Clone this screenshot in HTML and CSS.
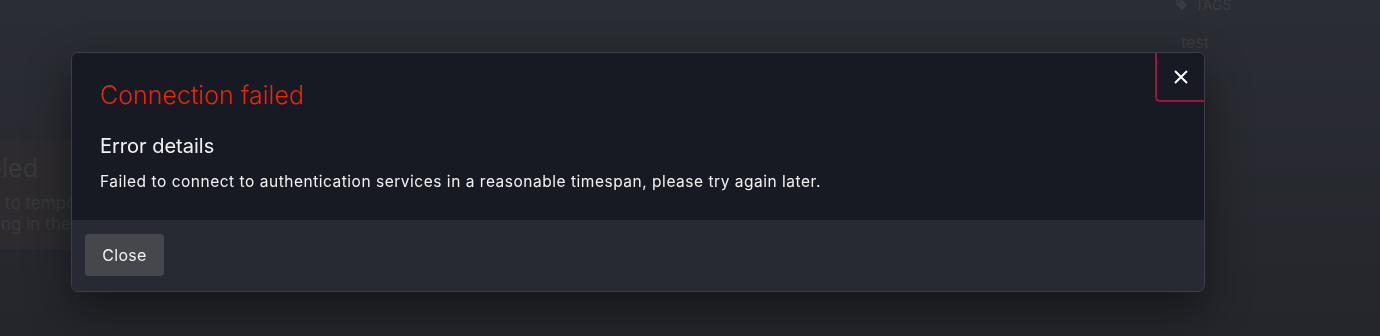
FILE: index.html
```html
<!DOCTYPE html>
<html lang="en">
<head>
  <meta charset="UTF-8">
  <title>Connection failed</title>
  <link rel="stylesheet" href="styles.css">
</head>
<body>

<div class="page">
  <div class="main">
    <div class="notice">
      <h3 class="line"><span class="cut cut-title">Account disabled</span></h3>
      <p class="line"><span class="cut cut-one">Your account has been set&nbsp;</span>to temporarily suspended</p>
      <p class="line"><span class="cut cut-two">while somethi</span>ng in the system is checked</p>
    </div>
  </div>
  <aside class="sidebar">
    <div class="side-title">
      <svg class="tag-icon" viewBox="0 0 16 16" width="13" height="13">
        <path d="M1 1h6.5l7.5 7.5-6.5 6.5L1 7.5z" fill="currentColor"/>
        <circle cx="4.5" cy="4.5" r="1.3" fill="#2a2c34"/>
      </svg>
      TAGS
    </div>
    <div class="side-item">test</div>
  </aside>
</div>

<div class="backdrop">
  <div class="modal">
    <button class="modal-x" aria-label="Close">
      <svg viewBox="0 0 14 14" width="14" height="14">
        <path d="M1 1L13 13M13 1L1 13" stroke="#fff" stroke-width="2" fill="none"/>
      </svg>
    </button>
    <div class="modal-body">
      <h2 class="modal-title">Connection failed</h2>
      <h4>Error details</h4>
      <p>Failed to connect to authentication services in a reasonable timespan, please try again later.</p>
    </div>
    <div class="modal-footer">
      <button class="btn">Close</button>
    </div>
  </div>
</div>

</body>
</html>
```

FILE: styles.css
```css
* {
  margin: 0;
  padding: 0;
  box-sizing: border-box;
}

html, body {
  height: 100%;
  font-family: Inter, Roboto, sans-serif;
  background: linear-gradient(to bottom, #2b2d35, #25262c);
  overflow: hidden;
}

/* page behind the dialog */
.page {
  display: flex;
  height: 100%;
}

.main {
  flex: 1;
  padding-top: 141px;
}

.notice {
  width: 90px;
  height: 108px;
  padding-top: 12px;
  background: #2d2b2e;
  color: #38383e;
  white-space: nowrap;
}

.line {
  display: flex;
}

.cut {
  display: flex;
  justify-content: flex-end;
  flex: none;
}

.cut-title { width: 38px; }
.cut-one { width: 5px; }
.cut-two { width: 1px; }

.notice h3 {
  font-weight: 400;
  font-size: 25px;
  margin-bottom: 10px;
}

.notice p {
  font-size: 17px;
  line-height: 21px;
}

.sidebar {
  width: 205px;
  color: #393b42;
}

.side-title {
  display: flex;
  align-items: center;
  gap: 7px;
  font-size: 14px;
  margin-top: -6px;
  height: 20px;
}

.side-item {
  margin: 18px 0 0 6px;
  font-size: 16px;
}

/* dialog */
.backdrop {
  position: fixed;
  top: 0;
  left: 0;
  width: 100%;
  height: 100%;
  padding: 52px 0 0 71px;
}

.modal {
  position: relative;
  width: 1134px;
  background: #282a33;
  border: 1px solid #3d3f47;
  border-radius: 7px;
  overflow: hidden;
  box-shadow: 0 18px 45px rgba(0, 0, 0, 0.45);
}

.modal-x {
  position: absolute;
  top: 0;
  right: 0;
  width: 49px;
  height: 49px;
  display: flex;
  align-items: center;
  justify-content: center;
  background: #171923;
  border: none;
  border-left: 2px solid #a3123f;
  border-bottom: 2px solid #a3123f;
  border-bottom-left-radius: 5px;
  cursor: pointer;
}

.modal-body {
  background: #171923;
  height: 167px;
  padding: 26px 28px 0 28px;
  color: #f2f2f2;
}

.modal-title {
  color: #ed230d;
  font-weight: 300;
  font-size: 25px;
  line-height: 32px;
  margin-bottom: 22px;
}

.modal-body h4 {
  font-weight: 400;
  font-size: 20px;
  line-height: 26px;
  margin-bottom: 12px;
}

.modal-body p {
  font-size: 15.5px;
  letter-spacing: 0.52px;
  line-height: 22px;
}

.modal-footer {
  padding: 14px 13px 15px;
}

.btn {
  width: 79px;
  height: 42px;
  font-family: Inter, Roboto, sans-serif;
  font-size: 16px;
  letter-spacing: 0.3px;
  color: #f0f0f0;
  background: #46474d;
  border: none;
  border-radius: 4px;
  cursor: pointer;
}
```
